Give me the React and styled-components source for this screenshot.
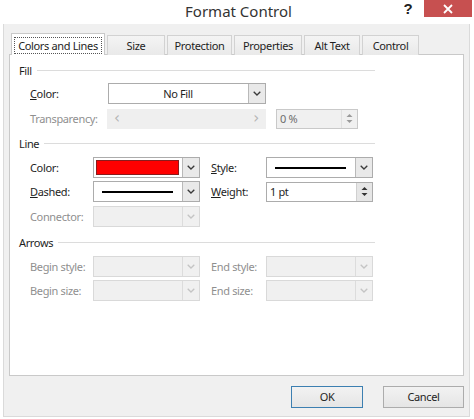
import React from "react"
import styled, { createGlobalStyle } from "styled-components"

const GlobalStyle = createGlobalStyle`
  html, body {
    margin: 0;
    padding: 0;
    background: #fff;
  }
  body {
    font-family: "Noto Sans", "Open Sans", sans-serif;
    font-size: 11px;
    letter-spacing: -0.35px;
    color: #1e1e1e;
  }
`

const Chevron = ({ color = "#3a3a3a" }) => (
  <svg width="8" height="5" viewBox="0 0 8 5">
    <path d="M0.7 0.7 L4 4 L7.3 0.7" fill="none" stroke={color} strokeWidth="1.3" />
  </svg>
)

const SpinArrows = ({ color = "#333" }) => (
  <svg width="7" height="11" viewBox="0 0 7 11">
    <path d="M3.5 1 L6.5 4 L0.5 4 Z" fill={color} />
    <path d="M0.5 7 L6.5 7 L3.5 10 Z" fill={color} />
  </svg>
)

function Combo({ width, disabled, children, centered }) {
  return (
    <ComboBox $width={width} $disabled={disabled}>
      <ComboValue $centered={centered}>{children}</ComboValue>
      <ComboButton $disabled={disabled}>
        <Chevron color={disabled ? "#c4c4c4" : "#3a3a3a"} />
      </ComboButton>
    </ComboBox>
  )
}

function Spin({ width, disabled, value }) {
  return (
    <SpinBox $width={width} $disabled={disabled}>
      <SpinValue $disabled={disabled}>{value}</SpinValue>
      <SpinButton $disabled={disabled}>
        <SpinArrows color={disabled ? "#9a9a9a" : "#333"} />
      </SpinButton>
    </SpinBox>
  )
}

const tabs = [
  { label: "Size", width: 58 },
  { label: "Protection", width: 65 },
  { label: "Properties", width: 68 },
  { label: "Alt Text", width: 56 },
  { label: "Control", width: 57 },
]

function App() {
  return (
    <>
      <GlobalStyle />
      <Window>
        <TitleBar>
          <Title>Format Control</Title>
          <Help>?</Help>
          <Close>
            <svg width="10" height="10" viewBox="0 0 10 10">
              <path d="M1 1 L9 9 M9 1 L1 9" stroke="#fff" strokeWidth="1.8" />
            </svg>
          </Close>
        </TitleBar>
        <Body>
          <TabRow>
            <ActiveTab>
              <Focus>Colors and Lines</Focus>
            </ActiveTab>
            {tabs.map((t) => (
              <Tab key={t.label} $width={t.width}>
                {t.label}
              </Tab>
            ))}
          </TabRow>
          <Panel>
            <Section>
              <Header>
                <span>Fill</span>
                <Rule />
              </Header>
              <FillRow $top={5}>
                <Label>
                  <u>C</u>olor:
                </Label>
                <Combo width={158} centered>
                  No Fill
                </Combo>
              </FillRow>
              <FillRow $top={4}>
                <Label $disabled>Transparency:</Label>
                <Slider>
                  <SliderArrow>&lsaquo;</SliderArrow>
                  <SliderArrow>&rsaquo;</SliderArrow>
                </Slider>
                <Spin width={82} disabled value="0 %" />
              </FillRow>
            </Section>

            <Section $top={7}>
              <Header>
                <span>Line</span>
                <Rule />
              </Header>
              <LineRow $top={6}>
                <Label>Color:</Label>
                <Combo width={107}>
                  <Swatch />
                </Combo>
                <SideLabel>
                  <u>S</u>tyle:
                </SideLabel>
                <Combo width={107}>
                  <Stroke />
                </Combo>
              </LineRow>
              <LineRow $top={3}>
                <Label>
                  <u>D</u>ashed:
                </Label>
                <Combo width={107}>
                  <Stroke />
                </Combo>
                <SideLabel>
                  <u>W</u>eight:
                </SideLabel>
                <Spin width={107} value="1 pt" />
              </LineRow>
              <LineRow $top={4}>
                <Label $disabled>Connector:</Label>
                <Combo width={107} disabled />
              </LineRow>
            </Section>

            <Section $top={8}>
              <Header>
                <span>Arrows</span>
                <Rule />
              </Header>
              <LineRow $top={6}>
                <Label $disabled>Begin style:</Label>
                <Combo width={107} disabled />
                <SideLabel $disabled>End style:</SideLabel>
                <Combo width={107} disabled />
              </LineRow>
              <LineRow $top={3}>
                <Label $disabled>Begin size:</Label>
                <Combo width={107} disabled />
                <SideLabel $disabled>End size:</SideLabel>
                <Combo width={107} disabled />
              </LineRow>
            </Section>
          </Panel>
          <Buttons>
            <Button $width={72} $default>
              OK
            </Button>
            <Button $width={81}>Cancel</Button>
          </Buttons>
        </Body>
      </Window>
    </>
  )
}

const Window = styled.div`
  width: 474px;
  height: 419px;
  display: flex;
  flex-direction: column;
  background: #fff;
`

const TitleBar = styled.div`
  height: 25px;
  display: flex;
  align-items: flex-start;
`

const Title = styled.div`
  flex: 1;
  text-align: center;
  font-size: 15px;
  letter-spacing: 0;
  line-height: 22px;
  color: #333;
  padding-left: 76px;
`

const Help = styled.div`
  width: 14px;
  margin-right: 9px;
  text-align: center;
  font-family: "Liberation Sans", sans-serif;
  font-weight: bold;
  font-size: 15px;
  line-height: 17px;
  color: #222;
`

const Close = styled.div`
  width: 48px;
  height: 17px;
  margin-right: 2px;
  background: #c75050;
  display: flex;
  align-items: center;
  justify-content: center;
`

const Body = styled.div`
  height: 392px;
  margin: 0 4px 2px 3px;
  border: 1px solid #dadada;
  border-top: none;
  background: #f0f0f0;
  padding: 9px 5px 0 5px;
  display: flex;
  flex-direction: column;
`

const TabRow = styled.div`
  display: flex;
  align-items: flex-end;
  gap: 2px;
  padding-left: 2px;
  margin-bottom: -1px;
  position: relative;
  z-index: 1;
`

const ActiveTab = styled.div`
  width: 94px;
  height: 22px;
  box-sizing: border-box;
  background: #fff;
  border: 1px solid #c9c9c9;
  border-bottom: none;
  display: flex;
  align-items: center;
  justify-content: center;
  padding: 1px 2px 0;
`

const Focus = styled.div`
  flex: 1;
  height: 17px;
  line-height: 16px;
  text-align: center;
  white-space: nowrap;
  border: 1px dotted #555;
  box-sizing: border-box;
`

const Tab = styled.div`
  width: ${(p) => p.$width}px;
  height: 20px;
  box-sizing: border-box;
  background: linear-gradient(#f4f4f4, #e9e9e9);
  border: 1px solid #d2d2d2;
  border-bottom: none;
  text-align: center;
  line-height: 19px;
`

const Panel = styled.div`
  height: 322px;
  box-sizing: border-box;
  background: #fff;
  border: 1px solid #c9c9c9;
  padding: 8px 0 0 9px;
`

const Section = styled.div`
  width: 356px;
  margin-top: ${(p) => p.$top || 0}px;
`

const Header = styled.div`
  display: flex;
  align-items: center;
  height: 15px;
  gap: 5px;
`

const Rule = styled.div`
  flex: 1;
  height: 1px;
  background: #dcdcdc;
`

const FillRow = styled.div`
  display: grid;
  grid-template-columns: 77px 159px 92px;
  align-items: center;
  height: 21px;
  padding-left: 11px;
  margin-top: ${(p) => p.$top || 0}px;

  & > :last-child {
    justify-self: end;
  }
`

const LineRow = styled.div`
  display: grid;
  grid-template-columns: 63px 107px 66px 107px;
  align-items: center;
  height: 21px;
  padding-left: 11px;
  margin-top: ${(p) => p.$top || 0}px;
`

const Label = styled.div`
  color: ${(p) => (p.$disabled ? "#8f8f8f" : "#1e1e1e")};
  white-space: nowrap;
`

const SideLabel = styled(Label)`
  padding-left: 11px;
`

const ComboBox = styled.div`
  width: ${(p) => p.$width}px;
  height: 21px;
  box-sizing: border-box;
  display: flex;
  border: 1px solid ${(p) => (p.$disabled ? "#d9d9d9" : "#acacac")};
  background: ${(p) => (p.$disabled ? "#f0f0f0" : "#fff")};
`

const ComboValue = styled.div`
  flex: 1;
  display: flex;
  align-items: center;
  justify-content: center;
  padding: 2px;
  margin-right: 1px;
`

const ComboButton = styled.div`
  width: 16px;
  display: flex;
  align-items: center;
  justify-content: center;
  background: ${(p) => (p.$disabled ? "#f0f0f0" : "#e9e9e9")};
  border-left: 1px solid ${(p) => (p.$disabled ? "#dcdcdc" : "#b9b9b9")};
`

const Swatch = styled.div`
  align-self: stretch;
  flex: 1;
  background: #f00;
  border: 1px solid #8a1c1c;
`

const Stroke = styled.div`
  flex: 1;
  height: 2px;
  margin: 0 6px;
  background: #000;
`

const Slider = styled.div`
  width: 159px;
  height: 20px;
  background: #efefef;
  display: flex;
  align-items: center;
  justify-content: space-between;
  padding: 0 7px;
  box-sizing: border-box;
`

const SliderArrow = styled.span`
  color: #b4b4b4;
  font-size: 15px;
  line-height: 15px;
  font-family: "DejaVu Sans", sans-serif;
`

const SpinBox = styled.div`
  width: ${(p) => p.$width}px;
  height: 20px;
  box-sizing: border-box;
  display: flex;
  border: 1px solid ${(p) => (p.$disabled ? "#c9c9c9" : "#acacac")};
  background: ${(p) => (p.$disabled ? "#f0f0f0" : "#fff")};
`

const SpinValue = styled.div`
  flex: 1;
  padding-left: 3px;
  line-height: 18px;
  color: ${(p) => (p.$disabled ? "#6d6d6d" : "#1e1e1e")};
`

const SpinButton = styled.div`
  width: 15px;
  display: flex;
  align-items: center;
  justify-content: center;
  background: ${(p) => (p.$disabled ? "#f0f0f0" : "#e6e6e6")};
  border-left: 1px solid ${(p) => (p.$disabled ? "#e0e0e0" : "#d0d0d0")};
`

const Buttons = styled.div`
  display: flex;
  justify-content: flex-end;
  gap: 20px;
  margin-top: 10px;
`

const Button = styled.div`
  width: ${(p) => p.$width}px;
  height: 22px;
  box-sizing: border-box;
  border: 1px solid ${(p) => (p.$default ? "#3c7fb1" : "#acacac")};
  background: linear-gradient(#f2f2f2, #e5e5e5);
  text-align: center;
  line-height: 20px;
  color: #1e1e1e;
`

export default App
